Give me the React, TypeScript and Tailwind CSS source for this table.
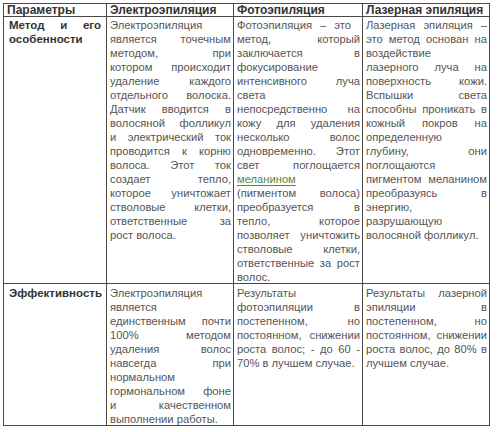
import type { ReactNode } from "react";

// Each cell is stored line by line so the justified wrapping matches the source.
type Lines = ReactNode[];

const electroMethod: Lines = [
  "Электроэпиляция",
  "является точечным",
  "методом, при",
  "котором происходит",
  "удаление каждого",
  "отдельного волоска.",
  "Датчик вводится в",
  "волосяной фолликул",
  "и электрический ток",
  "проводится к корню",
  "волоса. Этот ток",
  "создает тепло,",
  "которое уничтожает",
  "стволовые клетки,",
  "ответственные за",
  "рост волоса.",
];

const photoMethod: Lines = [
  <span key="f" className="block pr-[9px]">
    Фотоэпиляция – это
  </span>,
  "метод, который",
  "заключается в",
  "фокусирование",
  "интенсивного луча",
  "света",
  "непосредственно на",
  "кожу для удаления",
  "несколько волос",
  "одновременно. Этот",
  "свет поглощается",
  <a key="m" href="#" className="text-[#4f8a3c] underline underline-offset-2">
    меланином
  </a>,
  "(пигментом волоса)",
  "преобразуется в",
  "тепло, которое",
  "позволяет уничтожить",
  "стволовые клетки,",
  "ответственные за рост",
  "волос.",
];

const laserMethod: Lines = [
  "Лазерная эпиляция –",
  "это метод основан на",
  "воздействие",
  "лазерного луча на",
  "поверхность кожи.",
  "Вспышки света",
  "способны проникать в",
  "кожный покров на",
  "определенную",
  "глубину, они",
  "поглощаются",
  "пигментом меланином",
  "преобразуясь в",
  "энергию,",
  "разрушающую",
  "волосяной фолликул.",
];

const electroEffect: Lines = [
  "Электроэпиляция",
  "является",
  "единственным почти",
  "100% методом",
  "удаления волос",
  "навсегда при",
  "нормальном",
  "гормональном фоне",
  "и качественном",
  "выполнении работы.",
];

const photoEffect: Lines = [
  "Результаты",
  "фотоэпиляции в",
  "постепенном, но",
  "постоянном, снижении",
  "роста волос; - до 60 -",
  "70% в лучшем случае.",
];

const laserEffect: Lines = [
  "Результаты лазерной",
  "эпиляции в",
  "постепенном, но",
  "постоянном, снижении",
  "роста волос, до 80% в",
  "лучшем случае.",
];

function Justified({ lines }: { lines: Lines }) {
  return (
    <>
      {lines.map((line, i) => (
        <div
          key={i}
          className={i < lines.length - 1 ? "text-justify [text-align-last:justify]" : "text-left"}
        >
          {line}
        </div>
      ))}
    </>
  );
}

function Head({ children }: { children: ReactNode }) {
  return (
    <div className="border-r border-b border-[#4a4a4a] pl-[3px] text-[12px] font-bold text-[#333] leading-[12px] whitespace-nowrap">
      {children}
    </div>
  );
}

function Cell({ children, top }: { children: ReactNode; top: string }) {
  return (
    <div className={`border-r border-b border-[#4a4a4a] pl-[3px] pr-[2px] leading-[14px] ${top}`}>
      {children}
    </div>
  );
}

export default function App() {
  return (
    <div className="w-[500px] h-[432px] bg-white pl-[3px] pt-[3px] font-['Liberation_Sans',Arial,sans-serif] text-[11.2px] text-[#555]">
      <div className="grid w-fit grid-cols-[103px_127px_129px_127px] grid-rows-[13px_267px_142px] border-l border-t border-[#4a4a4a]">
        <Head>Параметры</Head>
        <Head>Электроэпиляция</Head>
        <Head>Фотоэпиляция</Head>
        <Head>Лазерная эпиляция</Head>

        <Cell top="pt-px pr-[5px] pl-[5px] text-[11.5px] font-bold text-[#333]">
          <Justified lines={["Метод и его", "особенности"]} />
        </Cell>
        <Cell top="pt-px">
          <Justified lines={electroMethod} />
        </Cell>
        <Cell top="pt-px">
          <Justified lines={photoMethod} />
        </Cell>
        <Cell top="pt-px">
          <Justified lines={laserMethod} />
        </Cell>

        <Cell top="pt-0.5 pl-[5px] text-[11.5px] font-bold text-[#333]">
          <Justified lines={["Эффективность"]} />
        </Cell>
        <Cell top="pt-0.5">
          <Justified lines={electroEffect} />
        </Cell>
        <Cell top="pt-0.5">
          <Justified lines={photoEffect} />
        </Cell>
        <Cell top="pt-0.5">
          <Justified lines={laserEffect} />
        </Cell>
      </div>
    </div>
  );
}
